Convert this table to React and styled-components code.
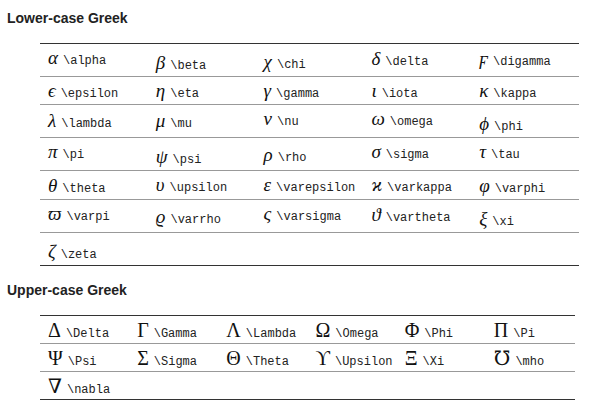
import * as React from "react";
import styled, { createGlobalStyle } from "styled-components";

const lower = [
  [["α", "alpha", 0], ["β", "beta", 5], ["χ", "chi", 4], ["δ", "delta", 1], ["ϝ", "digamma", 1]],
  [["ϵ", "epsilon", 0], ["η", "eta", 0], ["γ", "gamma", 0], ["ι", "iota", 0], ["κ", "kappa", 0]],
  [["λ", "lambda", 2], ["μ", "mu", 2], ["ν", "nu", 0], ["ω", "omega", 0], ["ϕ", "phi", 5]],
  [["π", "pi", 0], ["ψ", "psi", 5], ["ρ", "rho", 3], ["σ", "sigma", 0], ["τ", "tau", 0]],
  [["θ", "theta", 1], ["υ", "upsilon", 0], ["ε", "varepsilon", 0], ["ϰ", "varkappa", 0], ["φ", "varphi", 1]],
  [["ϖ", "varpi", 0], ["ϱ", "varrho", 3], ["ς", "varsigma", 0], ["ϑ", "vartheta", 1], ["ξ", "xi", 5]],
  [["ζ", "zeta", 5]],
];

const upper = [
  [["Δ", "Delta"], ["Γ", "Gamma"], ["Λ", "Lambda"], ["Ω", "Omega"], ["Φ", "Phi"], ["Π", "Pi"]],
  [["Ψ", "Psi"], ["Σ", "Sigma"], ["Θ", "Theta"], ["ϒ", "Upsilon"], ["Ξ", "Xi"], ["℧", "mho"]],
  [["∇", "nabla"]],
];

function GreekTable({ rows, cols, width, upright }) {
  return (
    <Table $width={width}>
      <tbody>
        {rows.map((row, i) => (
          <tr key={i}>
            {Array.from({ length: cols }).map((_, j) => {
              const cell = row[j];
              return (
                <Cell key={j} $drop={cell ? cell[2] || 0 : 0}>
                  <Entry>
                    {cell && (
                      <>
                        <Symbol $upright={upright}>{cell[0]}</Symbol>
                        <Code>\{cell[1]}</Code>
                      </>
                    )}
                  </Entry>
                </Cell>
              );
            })}
          </tr>
        ))}
      </tbody>
    </Table>
  );
}

export default function App() {
  return (
    <>
      <GlobalStyle />
      <Page>
        <Heading>Lower-case Greek</Heading>
        <GreekTable rows={lower} cols={5} width={539} />
        <Heading>Upper-case Greek</Heading>
        <GreekTable rows={upper} cols={6} width={535} upright />
      </Page>
    </>
  );
}

const GlobalStyle = createGlobalStyle`
  body {
    margin: 0;
    background: #fff;
  }
`;

const Page = styled.div`
  padding: 8px 0 0 7px;
  font-family: "Liberation Sans", Arial, sans-serif;
  color: #222;
`;

const Heading = styled.h2`
  margin: 0 0 15px;
  font-size: 14px;
  line-height: 20px;
  font-weight: bold;
  color: #222;

  table + & {
    margin-top: 14px;
  }
`;

const Table = styled.table`
  width: ${(p) => p.$width}px;
  margin-left: 33px;
  border-collapse: collapse;
  table-layout: fixed;
  border-top: 1px solid #333;
  border-bottom: 1px solid #333;

  tr + tr td {
    border-top: 1px solid #999;
  }
`;

const Cell = styled.td`
  padding: ${(p) => 5 + p.$drop}px 8px 4px;
  vertical-align: top;
  white-space: nowrap;
`;

const Entry = styled.div`
  display: flex;
  align-items: baseline;
  gap: 5px;
  height: 18px;
  line-height: 18px;
`;

const Symbol = styled.span`
  font-family: "Liberation Serif", "DejaVu Serif", serif;
  font-style: ${(p) => (p.$upright ? "normal" : "italic")};
  font-size: ${(p) => (p.$upright ? "20px" : "19px")};
  color: #111;
`;

const Code = styled.span`
  font-family: "Liberation Mono", "DejaVu Sans Mono", monospace;
  font-size: 12px;
  color: #222;
`;
